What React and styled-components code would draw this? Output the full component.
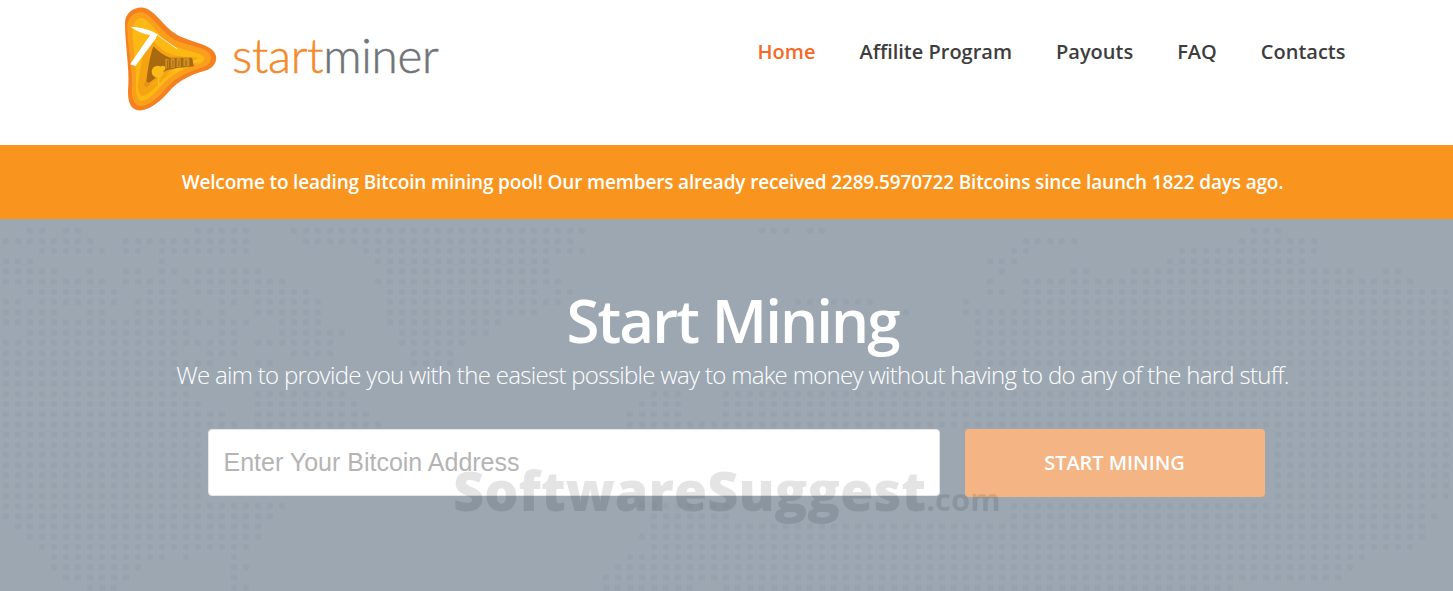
import React from "react";
import styled, { createGlobalStyle } from "styled-components";

const Global = createGlobalStyle`
  html, body { margin: 0; padding: 0; background: #fff; }
  body { font-family: "Open Sans", "Liberation Sans", sans-serif; overflow: hidden; }
  * { box-sizing: border-box; }
`;

const Page = styled.div`
  position: relative;
  width: 1453px;
  height: 591px;
  overflow: hidden;
`;
const Header = styled.header`
  height: 145px;
  display: flex;
  justify-content: space-between;
  align-items: flex-start;
  padding: 0 107.5px 0 120px;
  background: #fff;
`;
const Logo = styled.a`
  display: flex;
  align-items: center;
  gap: 12px;
  margin-top: 5px;
  text-decoration: none;
`;
const LogoMark = styled.svg`
  width: 100px;
  height: 108px;
  display: block;
`;
const Wordmark = styled.span`
  font-family: "Lato", sans-serif;
  font-weight: 300;
  font-size: 47.6px;
  line-height: 1;
  letter-spacing: -0.3px;
  -webkit-text-stroke: 0.5px currentColor;
  color: #6f7478;
  margin-top: -9px;
`;
const WordStart = styled.span`
  color: #f58a2a;
`;
const Nav = styled.nav`
  display: flex;
  gap: 44px;
  margin-top: 38px;
`;
const NavLink = styled.a`
  font-size: 20px;
  line-height: 28px;
  font-weight: 600;
  color: ${(p) => (p.$active ? "#f26a26" : "#3d3d3d")};
`;
const Banner = styled.div`
  height: 74px;
  display: flex;
  align-items: center;
  justify-content: center;
  background: #f9951f;
  color: #fff;
  font-size: 19px;
  font-weight: 600;
  letter-spacing: -0.17px;
  padding-left: 12px;
`;
const Hero = styled.section`
  position: relative;
  height: 372px;
  background: #9ca7b2;
  display: flex;
  flex-direction: column;
  align-items: center;
  padding: 64px 0 0 12px;
  color: #fff;
`;
const DotMap = styled.svg`
  position: absolute;
  inset: 0;
  width: 1453px;
  height: 372px;
`;
const Title = styled.h1`
  position: relative;
  margin: 0;
  font-size: 60px;
  line-height: 75px;
  font-weight: 600;
  letter-spacing: -1.9px;
`;
const Subtitle = styled.p`
  position: relative;
  margin: 0;
  font-size: 24px;
  line-height: 33px;
  font-weight: 300;
  letter-spacing: -0.69px;
`;
const Form = styled.form`
  position: relative;
  display: flex;
  align-items: flex-start;
  gap: 25px;
  margin: 38px 0 0 7px;
`;
const Input = styled.input`
  width: 732px;
  height: 67px;
  border: 1px solid #e6e6e6;
  border-radius: 4px;
  padding: 0 15px;
  background: #fff;
  font-family: "Liberation Sans", Arial, sans-serif;
  font-size: 25px;
  outline: none;
  &::placeholder { color: #b4b4b4; opacity: 1; }
`;
const Button = styled.button`
  width: 300px;
  height: 68px;
  border: 0;
  border-radius: 4px;
  background: #f4b483;
  color: #fff;
  font-family: "Open Sans", sans-serif;
  font-size: 20px;
  font-weight: 600;
  letter-spacing: -0.06px;
  text-transform: uppercase;
  padding-bottom: 2px;
`;
const Watermark = styled.div`
  position: absolute;
  left: 453px;
  top: 455px;
  display: flex;
  align-items: baseline;
  font-size: 54px;
  line-height: 70px;
  font-weight: 800;
  color: rgba(0, 0, 0, 0.105);
  filter: blur(0.6px);
  white-space: nowrap;
  pointer-events: none;
`;
const WatermarkTld = styled.span`
  font-size: 31px;
  font-weight: 700;
`;

/* Dot-world-map spans, per row: [rowIndex, x0, x1, x0, x1, ...] in page pixels. */
const scale = 2.148;
const leftRows = [
  [25,60,110,140,180,420,530,630,1260],[55,0,200,260,540,640,1230],[85,80,230,260,310,340,540,780,1260],
  [115,0,70,340,360,810,1180],[145,0,130,190,200,260,310,340,390,420,570,830,1190],[175,0,230,260,360,390,620,810,1210],
  [207,60,250,320,380,420,670,830,1160,1190,1240],[238,0,50,80,250,290,380,470,510,550,690,830,1210],
  [268,0,130,190,230,290,440,470,490,550,690,830,1160],[298,0,540,600,690,830,1080],[330,60,410,470,510,600,740,850,1060],
  [360,0,520,550,720,850,1000],[390,0,380,440,510,620,710,880,980],[420,0,350,370,460,550,590,880,980],
  [450,0,380],[480,0,400],[510,0,400,540,740,1400,1470],[540,0,450,540,770,1370,1460],[570,0,480,540,790,1350,1470],
  [605,0,520,540,820,1350,1568],[635,0,450],[665,0,440],[695,0,430],[725,0,430],[755,0,430],[785,0,430],[820,0,450],
  [850,0,610,1370,1568],[880,0,590,1380,1568],[910,20,560,1390,1568],[940,50,560,1370,1568],[970,80,530,1380,1568],
  [1000,100,350,380,400,490,510,1340,1568],[1035,100,300,490,530,1310,1568],[1065,130,290,490,510,1290,1568],[1095,180,270,490,530,1300,1500],
];
const rightRows = [
  [25,80,150,180,230,1140,1210],[55,650,770,1110,1280],[85,600,660,980,1280],[115,570,640,960,1250],
  [145,590,610,750,790,880,1360,1400,1470],[175,550,590,640,1500],[207,570,610,650,1568],[238,150,330,520,540,640,1568],
  [268,380,400,520,1568],[298,530,1568],[330,530,1568],[360,530,1568],[390,530,1568],[420,530,1568],[450,1230,1568],[480,1230,1568],
  [510,0,1568],[540,0,1568],[570,0,1568],[605,0,1568],[635,1180,1568],[665,1180,1568],[695,1180,1568],[725,1180,1568],
  [755,1180,1568],[785,1180,1568],[820,1180,1568],[850,620,1520],[880,600,1540],[910,0,1520],[940,0,1510],[970,0,1500],
  [1000,0,1380],[1035,0,1360],[1065,0,1340],[1095,0,1100],
];

function buildDots() {
  const out = new Set();
  const add = (rows, origin) => {
    rows.forEach(([zy, ...spans]) => {
      const row = Math.round(zy / 30.6);
      for (let i = 0; i < spans.length; i += 2) {
        const a = origin + spans[i] / scale;
        const b = origin + spans[i + 1] / scale;
        for (let col = Math.ceil((a - 6) / 12); 6 + col * 12 <= b; col++) out.add(`${col},${row}`);
      }
    });
  };
  add(leftRows, 0);
  add(rightRows, 723);
  return [...out].map((k) => k.split(",").map(Number));
}
const dots = buildDots();

const navItems = ["Home", "Affilite Program", "Payouts", "FAQ", "Contacts"];

export default function App() {
  return (
    <Page>
      <Global />
      <Header>
        <Logo>
          <LogoMark viewBox="0 0 300 324" aria-hidden="true">
            <path fill="#f4801f" d="M15 55C15 25 40 5 70 8C100 12 125 55 160 82C190 105 240 112 268 128C298 145 295 180 262 195C215 208 175 225 145 262C115 298 75 322 50 315C25 308 22 275 25 240C28 190 15 115 15 55Z" />
            <path fill="#f99f1c" d="M22 62C24 34 46 18 68 22C92 28 114 66 148 94C182 120 234 122 260 138C280 150 276 176 252 186C208 198 164 218 134 254C108 286 76 308 56 302C36 296 34 268 36 236C38 188 20 112 22 62Z" />
            <path fill="#fdb913" d="M38 72C40 50 54 36 70 40C88 48 106 78 136 108C170 134 216 136 246 150C258 158 252 172 238 176C198 186 152 208 122 244C100 270 76 292 62 288C50 282 46 258 48 230C50 184 36 114 38 72Z" />
            <path fill="#f6a313" d="M54 236C62 190 70 130 84 94C100 110 118 130 140 142C170 158 206 156 238 158C198 176 150 198 116 236C96 258 76 276 64 272C56 266 52 252 54 236Z" />
            <path fill="#fdc62c" d="M64 258C100 246 120 214 160 198C190 188 220 180 240 164C200 176 156 190 124 220C104 238 84 250 64 258Z" />
            <path fill="#a8690f" d="M78 238C82 200 90 152 100 124C116 140 132 152 150 158L216 158L222 184C196 188 162 188 136 198C112 208 100 230 78 238Z" />
            <path fill="#cf9126" d="M136 162H146V190H136ZM152 160H164V188H152ZM170 160H182V186H170ZM190 160H208V184H190Z" />
            <path fill="#a8690f" d="M141 166H144V188H141ZM157 166H160V186H157ZM175 166H178V184H175ZM196 166H200V182H196Z" />
            <circle fill="#fdbb1a" cx="113" cy="200" r="18" />
            <circle fill="#fdbb1a" cx="128" cy="190" r="8" />
            <path stroke="#fdc92e" strokeWidth="3" fill="none" d="M116 212V240" />
            <circle fill="#f9a51e" cx="228" cy="178" r="6" />
            <circle fill="#e89214" cx="80" cy="238" r="8" />
            <path stroke="#fff" strokeOpacity="0.75" strokeWidth="3" fill="none" d="M112 90L172 132" />
            <path fill="#fff" d="M31 65C60 66 92 74 113 88L106 101L92 90C72 88 52 80 31 65Z" />
            <path fill="#fff" d="M92 88L108 100L46 183L30 178Z" />
          </LogoMark>
          <Wordmark><WordStart>start</WordStart>miner</Wordmark>
        </Logo>
        <Nav>
          {navItems.map((n, i) => (
            <NavLink key={n} $active={i === 0}>{n}</NavLink>
          ))}
        </Nav>
      </Header>
      <Banner>Welcome to leading Bitcoin mining pool! Our members already received 2289.5970722 Bitcoins since launch 1822 days ago.</Banner>
      <Hero>
        <DotMap viewBox="0 0 1453 372" aria-hidden="true">
          <g fill="#8d98a4" fillOpacity="0.26">
            {dots.map(([c, r]) => (
              <rect key={`${c}-${r}`} x={3 + c * 12} y={1 + r * 10.2 - 2.5} width="6" height="6" rx="2" />
            ))}
          </g>
        </DotMap>
        <Title>Start Mining</Title>
        <Subtitle>We aim to provide you with the easiest possible way to make money without having to do any of the hard stuff.</Subtitle>
        <Form onSubmit={(e) => e.preventDefault()}>
          <Input placeholder="Enter Your Bitcoin Address" />
          <Button type="button">Start Mining</Button>
        </Form>
      </Hero>
      <Watermark>SoftwareSuggest<WatermarkTld>.com</WatermarkTld></Watermark>
    </Page>
  );
}
